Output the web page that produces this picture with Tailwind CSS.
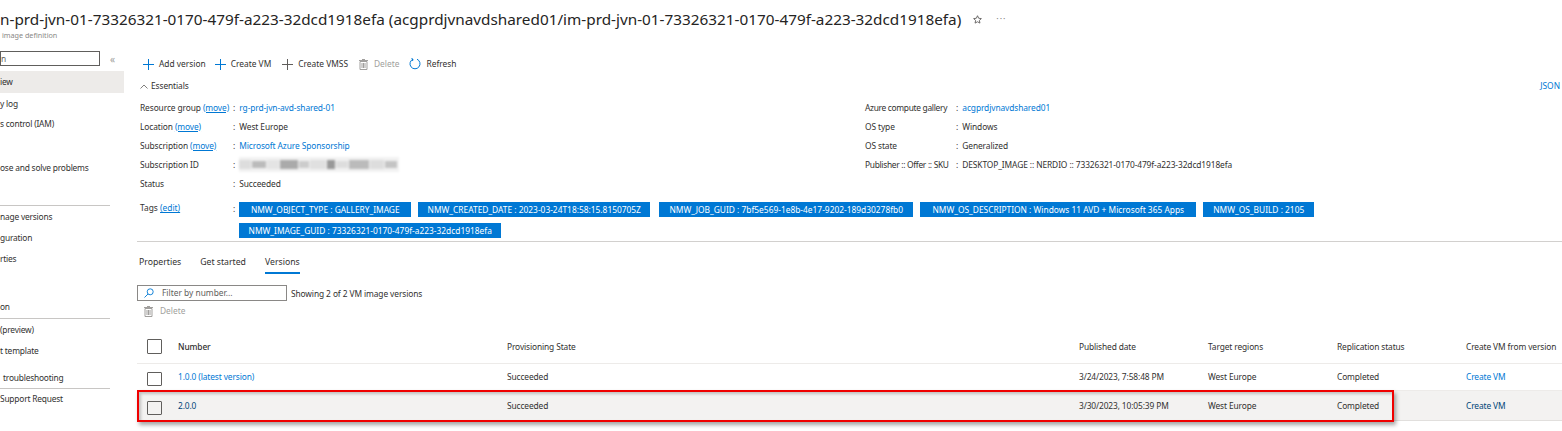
<!DOCTYPE html>
<html lang="en">
<head>
<meta charset="UTF-8" />
<title>VM image definition</title>
<script src="https://cdn.jsdelivr.net/npm/@tailwindcss/browser@4"></script>
</head>
<body class="w-[1562px] h-[431px] overflow-hidden bg-white text-[#323130] text-[8.4px] leading-[12px] font-['Noto_Sans','Open_Sans',sans-serif]">

  <!-- Title -->
  <header class="h-[44px] pt-[6px]">
    <div class="flex items-center h-[26px]">
      <h1 class="text-[15.3px] leading-[26px] whitespace-nowrap text-[#252423]">n-prd-jvn-01-73326321-0170-479f-a223-32dcd1918efa (acgprdjvnavdshared01/im-prd-jvn-01-73326321-0170-479f-a223-32dcd1918efa)</h1>
      <svg class="ml-[12px] w-[9px] h-[9px]" viewBox="0 0 10 10" fill="none" stroke="#605e5c" stroke-width="1"><path d="M5 .8l1.300 2.800 3 .4-2.200 2 .6 3L5 7.500 2.300 9l.6-3-2.200-2 3-.4z"/></svg>
      <span class="ml-[14px] text-[#8a8886] text-[9px] tracking-[1px] leading-[8px]">···</span>
    </div>
    <p class="-mt-[2px] pl-[2px] text-[7.2px] leading-[11px] text-[#8a8886]">image definition</p>
  </header>

  <div class="flex">
    <!-- Sidebar -->
    <nav class="w-[124px] shrink-0 whitespace-nowrap tracking-[-0.2px]">
      <div class="flex items-center h-[15px] mt-[7px]">
        <div class="w-[100px] h-[15px] border border-[#605e5c] text-[#605e5c] leading-[13px]">n</div>
        <span class="ml-[10px] text-[#a19f9d] text-[10px] leading-[14px]">«</span>
      </div>
      <div class="h-[22px] mt-[5px] bg-[#edebe9] leading-[22px]">iew</div>
      <div class="mt-[3px] h-[16px] leading-[16px]">y log</div>
      <div class="mt-[4px] h-[16px] leading-[16px]">s control (IAM)</div>
      <div class="mt-[28px] h-[16px] leading-[16px]">ose and solve problems</div>
      <div class="mt-[29px] w-[110px] border-t border-[#c8c6c4]"></div>
      <div class="mt-[3px] h-[16px] leading-[16px]">nage versions</div>
      <div class="mt-[5px] h-[16px] leading-[16px]">guration</div>
      <div class="mt-[5px] h-[16px] leading-[16px]">rties</div>
      <div class="mt-[32px] h-[16px] leading-[16px]">on</div>
      <div class="mt-[3px] w-[110px] border-t border-[#c8c6c4]"></div>
      <div class="mt-[3px] h-[16px] leading-[16px]">(preview)</div>
      <div class="mt-[5px] h-[16px] leading-[16px]">t template</div>
      <div class="mt-[11px] h-[16px] leading-[16px] pl-[3px]">troubleshooting</div>
      <div class="mt-[2px] w-[110px] border-t border-[#c8c6c4]"></div>
      <div class="mt-[2px] h-[16px] leading-[16px]">Support Request</div>
    </nav>

    <!-- Main -->
    <main class="relative flex-1 min-w-0">
      <!-- Toolbar -->
      <div class="flex items-center h-[16px] mt-[12px] pl-[19px]">
        <svg class="w-[11px] h-[11px]" viewBox="0 0 11 11" stroke="#0078d4" stroke-width="1"><path d="M5.500 0v11M0 5.500h11"/></svg>
        <span class="ml-[5px]">Add version</span>
        <svg class="ml-[9px] w-[11px] h-[11px]" viewBox="0 0 11 11" stroke="#0078d4" stroke-width="1"><path d="M5.500 0v11M0 5.500h11"/></svg>
        <span class="ml-[5px]">Create VM</span>
        <svg class="ml-[11px] w-[11px] h-[11px]" viewBox="0 0 11 11" stroke="#605e5c" stroke-width="1"><path d="M5.500 0v11M0 5.500h11"/></svg>
        <span class="ml-[5px]">Create VMSS</span>
        <svg class="ml-[11px] w-[9px] h-[11px]" viewBox="0 0 9 11" fill="none" stroke="#a19f9d" stroke-width="1"><path d="M1 2.500h7v8H1zM0 1.500h9M3 .5h3M3 4v5M4.500 4v5M6 4v5"/></svg>
        <span class="ml-[6px] text-[#a19f9d]">Delete</span>
        <svg class="ml-[10px] w-[12px] h-[12px]" viewBox="0 0 12 12" fill="none" stroke="#0078d4" stroke-width="1"><path d="M4 1.200a5 5 0 1 0 4 0M4 1.200L2.500 .5M4 1.200L3.500 3"/></svg>
        <span class="ml-[5px]">Refresh</span>
      </div>

      <!-- Essentials -->
      <div class="flex items-center h-[14px] mt-[7px] pl-[16px] pr-[2px]">
        <svg class="w-[8px] h-[5px]" viewBox="0 0 8 5" fill="none" stroke="#605e5c" stroke-width=".8"><path d="M.5 4.500L4 1l3.500 3.500"/></svg>
        <span class="ml-[3px] tracking-[-0.1px]">Essentials</span>
        <a class="ml-auto text-[#0078d4]">JSON</a>
      </div>

      <div class="grid grid-cols-[725px_1fr] pl-[16px] mt-[5px] whitespace-nowrap tracking-[-0.1px]">
        <dl class="grid grid-cols-[93px_1fr] auto-rows-[19px] items-center">
          <dt>Resource group <a class="text-[#0078d4] underline">(move)</a></dt><dd>: &nbsp;<a class="text-[#0078d4]">rg-prd-jvn-avd-shared-01</a></dd>
          <dt>Location <a class="text-[#0078d4] underline">(move)</a></dt><dd>: &nbsp;West Europe</dd>
          <dt>Subscription <a class="text-[#0078d4] underline">(move)</a></dt><dd>: &nbsp;<a class="text-[#0078d4]">Microsoft Azure Sponsorship</a></dd>
          <dt>Subscription ID</dt>
          <dd class="flex items-center">:
            <!-- blurred id -->
            <div class="ml-[4px] flex items-center h-[15px] w-[160px] gap-[1px] blur-[1px] bg-[#f2f2f2]">
              <i class="w-[12px] h-[9px] bg-[#ddd]"></i><i class="w-[14px] h-[7px] bg-[#bbb]"></i><i class="w-[12px] h-[9px] bg-[#e4e4e4]"></i><i class="w-[18px] h-[9px] bg-[#aaa]"></i><i class="w-[10px] h-[7px] bg-[#ccc]"></i><i class="w-[16px] h-[9px] bg-[#e0e0e0]"></i><i class="w-[8px] h-[9px] bg-[#999]"></i><i class="w-[12px] h-[7px] bg-[#ddd]"></i><i class="w-[20px] h-[9px] bg-[#bbb]"></i><i class="w-[14px] h-[9px] bg-[#ddd]"></i><i class="w-[12px] h-[7px] bg-[#c4c4c4]"></i>
            </div>
          </dd>
          <dt>Status</dt><dd>: &nbsp;Succeeded</dd>
        </dl>
        <dl class="grid grid-cols-[91px_1fr] auto-rows-[19px] items-center">
          <dt class="tracking-[-0.3px]">Azure compute gallery</dt><dd>: &nbsp;<a class="text-[#0078d4]">acgprdjvnavdshared01</a></dd>
          <dt>OS type</dt><dd>: &nbsp;Windows</dd>
          <dt>OS state</dt><dd>: &nbsp;Generalized</dd>
          <dt class="tracking-[-0.3px]">Publisher :: Offer :: SKU</dt><dd>: &nbsp;DESKTOP_IMAGE :: NERDIO :: 73326321-0170-479f-a223-32dcd1918efa</dd>
        </dl>
      </div>

      <!-- Tags -->
      <div class="flex pl-[16px] mt-[9px]">
        <div class="w-[93px] shrink-0 leading-[12px]">Tags <a class="text-[#0078d4] underline">(edit)</a></div>
        <div class="flex items-start">
          <span class="pt-[1px]">:</span>
          <div class="ml-[4px] flex flex-wrap gap-x-[7px] gap-y-[6px] text-white leading-[15px] whitespace-nowrap text-center">
            <span class="w-[172px] h-[15px] bg-[#0078d4]">NMW_OBJECT_TYPE : GALLERY_IMAGE</span>
            <span class="w-[232px] h-[15px] bg-[#0078d4]">NMW_CREATED_DATE : 2023-03-24T18:58:15.8150705Z</span>
            <span class="ml-[2px] w-[254px] h-[15px] bg-[#0078d4]">NMW_JOB_GUID : 7bf5e569-1e8b-4e17-9202-189d30278fb0</span>
            <span class="w-[276px] h-[15px] bg-[#0078d4]">NMW_OS_DESCRIPTION : Windows 11 AVD + Microsoft 365 Apps</span>
            <span class="w-[111px] h-[15px] bg-[#0078d4]">NMW_OS_BUILD : 2105</span>
            <span class="w-[262px] h-[15px] bg-[#0078d4]">NMW_IMAGE_GUID : 73326321-0170-479f-a223-32dcd1918efa</span>
          </div>
        </div>
      </div>

      <div class="mt-[3px] ml-[13px] border-t border-[#d2d0ce]"></div>

      <!-- Tabs -->
      <div class="flex gap-[19px] pl-[15px] mt-[9px] h-[23px] text-[8.7px]">
        <span class="pt-[5px]">Properties</span>
        <span class="pt-[5px]">Get started</span>
        <span class="pt-[5px] border-b-2 border-[#0078d4]">Versions</span>
      </div>

      <!-- Filter -->
      <div class="flex items-center mt-[11px] pl-[13px] h-[16px]">
        <div class="flex items-center w-[150px] h-[16px] border border-[#8a8886] pl-[6px] text-[#605e5c]">
          <svg class="w-[10px] h-[10px]" viewBox="0 0 10 10" fill="none" stroke="#0078d4" stroke-width=".9"><circle cx="6.200" cy="3.800" r="3"/><path d="M4 6L.5 9.500"/></svg>
          <span class="ml-[8px]">Filter by number...</span>
        </div>
        <span class="ml-[4px] pt-[1px] tracking-[-0.1px]">Showing 2 of 2 VM image versions</span>
      </div>
      <div class="flex items-center mt-[2px] pl-[20px] h-[16px] text-[#a19f9d]">
        <svg class="w-[9px] h-[11px]" viewBox="0 0 9 11" fill="none" stroke="#a19f9d" stroke-width="1"><path d="M1 2.500h7v8H1zM0 1.500h9M3 .5h3M3 4v5M4.500 4v5M6 4v5"/></svg>
        <span class="ml-[7px]">Delete</span>
      </div>

      <!-- Versions table -->
      <div class="mt-[11px] ml-[13px] tracking-[-0.12px]">
        <div class="grid grid-cols-[41px_329px_572px_129px_129px_129px_1fr] items-center h-[34px] border-b border-[#edebe9] whitespace-nowrap">
          <span class="ml-[10px] w-[15px] h-[15px] border border-[#605e5c] rounded-[1px]"></span>
          <span class="font-medium">Number</span>
          <span>Provisioning State</span>
          <span>Published date</span>
          <span>Target regions</span>
          <span>Replication status</span>
          <span>Create VM from version</span>
        </div>
        <div class="grid grid-cols-[41px_329px_572px_129px_129px_129px_1fr] items-center h-[27px] border-b border-[#edebe9] whitespace-nowrap">
          <span class="ml-[10px] mt-[3px] w-[15px] h-[14px] border border-[#605e5c] rounded-[1px]"></span>
          <a class="text-[#0078d4]">1.0.0 (latest version)</a>
          <span>Succeeded</span>
          <span>3/24/2023, 7:58:48 PM</span>
          <span>West Europe</span>
          <span>Completed</span>
          <a class="text-[#0078d4]">Create VM</a>
        </div>
        <div class="grid grid-cols-[41px_329px_572px_129px_129px_129px_1fr] items-center h-[30px] bg-[#f3f2f1] border-b border-[#e1dfdd] whitespace-nowrap">
          <span class="ml-[10px] mt-[4px] w-[15px] h-[14px] border border-[#605e5c] rounded-[1px]"></span>
          <a class="text-[#004578]">2.0.0</a>
          <span>Succeeded</span>
          <span>3/30/2023, 10:05:39 PM</span>
          <span>West Europe</span>
          <span>Completed</span>
          <a class="text-[#004578]">Create VM</a>
        </div>
      </div>

      <!-- Red annotation box over the second row -->
      <div class="absolute left-[13px] top-[346px] w-[1257px] h-[32px] border-2 border-[#f00000] shadow-[2px_3px_4px_rgba(0,0,0,0.35),inset_2px_2px_3px_rgba(0,0,0,0.2)]"></div>
    </main>
  </div>
</body>
</html>
